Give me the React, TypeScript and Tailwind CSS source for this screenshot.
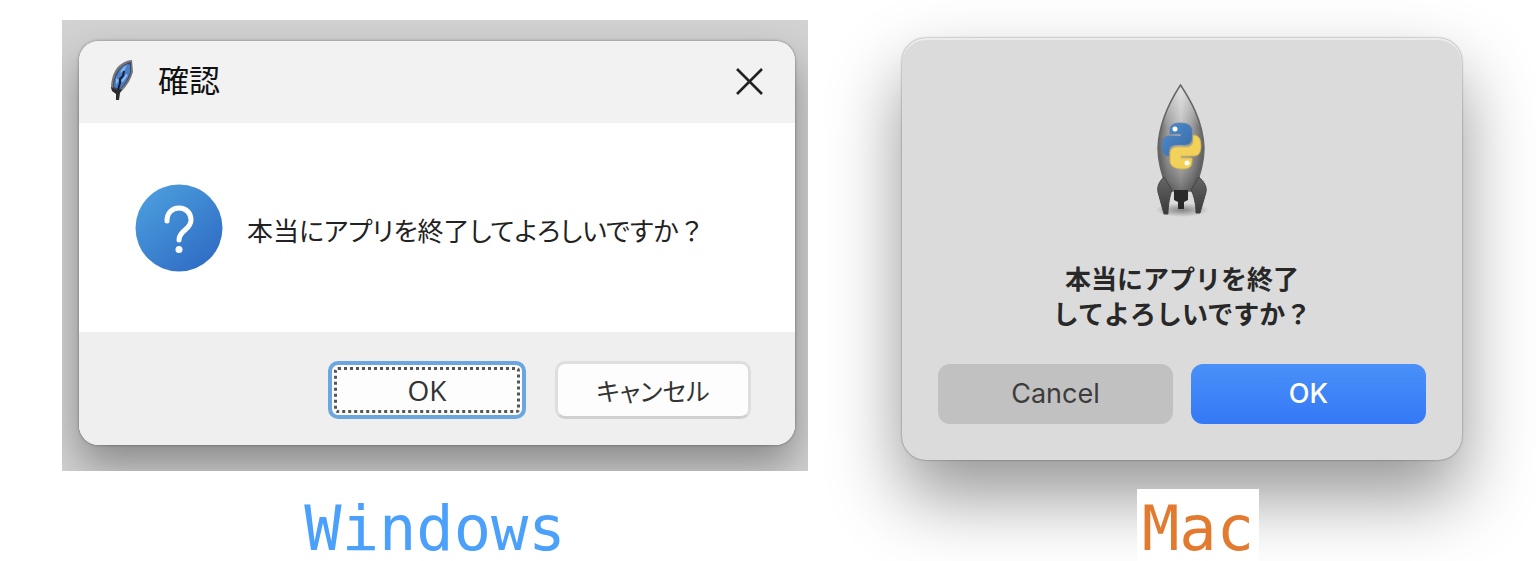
import type { ReactNode } from "react";

const sans = "font-['Inter','Noto_Sans_CJK_JP',sans-serif]";
const winSans = "font-['Open_Sans','Noto_Sans_CJK_JP',sans-serif]";

function FeatherIcon() {
  return (
    <svg width="24" height="43" viewBox="0 0 24 43" aria-hidden="true">
      <path
        d="M22 1 C16 1 9 5 5 12 C2 17 1 24 1 29 C2 32 4 34 7 34 L11 33 C17 27 21 20 23 13 Z"
        fill="#77777a"
      />
      <path
        d="M21 3 C16 4 10 8 7 13 C4 18 3 24 3 29 L8 32 C14 27 19 21 21 13 Z"
        fill="#3a4a66"
      />
      <path
        d="M18 5 C14 6 10 9 8 14 C5 18 4 24 4 28 L9 30 C14 26 18 20 20 13 L20 6 Z"
        fill="#4a80c8"
      />
      <path
        d="M17 6 C13 8 11 11 10 14 L14 12 Z M16 15 L18 16 L13 23 L11 22 Z M6 19 L9 21 L6 26 Z"
        fill="#8ab6ec"
      />
      <path d="M14 12 L13 17 L10 20 L10 24 L8 31" fill="none" stroke="#16203a" strokeWidth="2" />
      <path d="M1 28 L7 31 L12 30 L10 34 L9 41 L6 41 L6 35 L2 32 Z" fill="#2b2b2b" />
    </svg>
  );
}

function QuestionIcon() {
  return (
    <svg width="88" height="88" viewBox="0 0 88 88" className="shrink-0" aria-hidden="true">
      <defs>
        <linearGradient id="question-fill" x1="0.15" y1="0.1" x2="0.85" y2="0.95">
          <stop offset="0" stopColor="#4a9bdc" />
          <stop offset="1" stopColor="#2f6cc4" />
        </linearGradient>
      </defs>
      <circle cx="44" cy="44" r="43.5" fill="url(#question-fill)" />
      <path
        d="M32 37 C32 29 37 24 44 24 C51 24 56 29 56 36 C56 46 44 46 44 56"
        fill="none"
        stroke="#fff"
        strokeWidth="5"
        strokeLinecap="round"
      />
      <circle cx="44" cy="65.5" r="3.5" fill="#fff" />
    </svg>
  );
}

function RocketIcon() {
  return (
    <svg width="56" height="136" viewBox="0 0 56 136" aria-hidden="true">
      <defs>
        <linearGradient id="rocket-hull" x1="0" x2="1">
          <stop offset="0" stopColor="#4c4c4c" />
          <stop offset="0.2" stopColor="#8d8d8d" />
          <stop offset="0.5" stopColor="#bcbcbc" />
          <stop offset="0.75" stopColor="#8f8f8f" />
          <stop offset="1" stopColor="#4a4a4a" />
        </linearGradient>
        <linearGradient id="rocket-shade" x1="0" y1="0" x2="0" y2="1">
          <stop offset="0" stopColor="#fff" stopOpacity="0.6" />
          <stop offset="0.4" stopColor="#fff" stopOpacity="0.1" />
          <stop offset="1" stopColor="#000" stopOpacity="0.4" />
        </linearGradient>
        <linearGradient id="rocket-fin" x1="0" y1="0" x2="0" y2="1">
          <stop offset="0" stopColor="#666" />
          <stop offset="1" stopColor="#3a3a3a" />
        </linearGradient>
        <linearGradient id="snake-blue" x1="0" y1="0" x2="1" y2="1">
          <stop offset="0" stopColor="#4f8fcf" />
          <stop offset="1" stopColor="#3868a4" />
        </linearGradient>
        <linearGradient id="snake-yellow" x1="0" y1="0" x2="1" y2="1">
          <stop offset="0" stopColor="#f3d45f" />
          <stop offset="1" stopColor="#f2cf55" />
        </linearGradient>
        <radialGradient id="rocket-ground">
          <stop offset="0" stopColor="#000" stopOpacity="0.4" />
          <stop offset="1" stopColor="#000" stopOpacity="0" />
        </radialGradient>
      </defs>
      <ellipse cx="28" cy="126" rx="27" ry="7" fill="url(#rocket-ground)" />
      <path
        d="M26.5 1 C35 14 49 36 50 64 C50 78 46 92 40 107 H14 C8 92 4 78 4 64 C5 36 18 14 26.5 1 Z"
        fill="url(#rocket-hull)"
      />
      <path
        d="M26.5 1 C35 14 49 36 50 64 C50 78 46 92 40 107 H14 C8 92 4 78 4 64 C5 36 18 14 26.5 1 Z"
        fill="url(#rocket-shade)"
        stroke="#666"
        strokeWidth="1.5"
      />
      <path d="M20 106 H34 V116 L30 118 V125 H24 V118 L20 116 Z" fill="#2a2a2a" />
      <path
        d="M10 93 C5 98 3 102 4 108 L10 130 H14 C14 121 16 111 18 106 Z"
        fill="url(#rocket-fin)"
        stroke="#444"
      />
      <path
        d="M45 93 C50 98 53 102 52 108 L46 129 H42 C42 121 40 111 37 106 Z"
        fill="url(#rocket-fin)"
        stroke="#444"
      />
      <g transform="translate(8 39)">
        <path
          d="M18 0 C9 0 8 4 8 8 V11 H19 V13 H7 C2 13 0 17 0 23 C0 29 2 33 7 33 V28 C7 24 10 22 14 22 H23 C27 22 30 19 30 15 V8 C30 3 26 0 18 0 Z"
          fill="url(#snake-blue)"
          stroke="#5b7ea8"
          strokeWidth="0.8"
        />
        <path
          d="M21 46 C29 46 30 42 30 38 V35 H19 V33 H32 C37 33 39 29 39 23 C39 16 37 12 31 12 V17 C31 22 28 24 24 24 H15 C11 24 8 26 8 31 V38 C8 43 13 46 21 46 Z"
          fill="url(#snake-yellow)"
          stroke="#cdb04e"
          strokeWidth="0.8"
        />
        <circle cx="13" cy="6" r="2.5" fill="#fff" />
        <circle cx="25" cy="40" r="2.5" fill="#fff" />
      </g>
    </svg>
  );
}

function WindowsDialog() {
  return (
    <div className="overflow-hidden bg-[#d2d2d2] pt-[21px] pr-[13px] pb-[26px] pl-[17px]">
      <div
        role="dialog"
        aria-labelledby="win-title"
        className={`${winSans} overflow-hidden rounded-[20px] bg-white shadow-[0_0_3px_rgba(0,0,0,0.4),0_20px_40px_rgba(0,0,0,0.35)]`}
      >
        <header className="flex h-[82px] items-center bg-[#f2f2f2] pr-[31px] pb-1 pl-[31px]">
          <FeatherIcon />
          <h2 id="win-title" className="ml-6 text-[31px] text-[#111]">
            確認
          </h2>
          <button type="button" aria-label="閉じる" className="ml-auto pt-[2px]">
            <svg width="29" height="29" viewBox="0 0 29 29" aria-hidden="true">
              <path d="M2 2 L27 27 M27 2 L2 27" stroke="#222" strokeWidth="2.6" />
            </svg>
          </button>
        </header>

        <div className="flex h-[209px] items-center gap-6 pl-14">
          <QuestionIcon />
          <p className="pt-2 text-[26px] whitespace-nowrap text-[#222]">
            <span className="[font-feature-settings:'palt']">本当にアプリを終了してよろしいですか</span>？
          </p>
        </div>

        <footer className="flex justify-end gap-[29px] bg-[#efefef] pt-[29px] pr-11 pb-[26px] text-[#333]">
          <button
            type="button"
            className="h-[58px] w-[198px] rounded-[10px] border-4 border-[#6ba6de] bg-[#fdfdfd] p-[2px] text-[28px]"
          >
            <span className="flex h-full items-center justify-center rounded-sm border-3 border-dotted border-[#555]">
              OK
            </span>
          </button>
          <button
            type="button"
            className="h-[58px] w-[196px] rounded-[10px] border-3 border-[#dedede] border-b-[#d0d0d0] bg-[#fdfdfd] pt-1 text-[25px] [font-feature-settings:'palt']"
          >
            キャンセル
          </button>
        </footer>
      </div>
    </div>
  );
}

function MacDialog() {
  return (
    <div
      role="dialog"
      aria-labelledby="mac-message"
      className={`${sans} rounded-3xl bg-[#dbdbdb] px-9 pt-[46px] pb-9 shadow-[inset_0_2px_1px_rgba(255,255,255,0.5),0_0_2px_rgba(0,0,0,0.5),0_36px_72px_rgba(0,0,0,0.42)]`}
    >
      <div className="flex justify-center">
        <RocketIcon />
      </div>
      <p id="mac-message" className="mt-[42px] text-center text-[26px] leading-[35px] font-bold text-[#282828]">
        本当にアプリを終了
        <br />
        してよろしいですか？
      </p>
      <div className="mt-8 grid grid-cols-2 gap-[18px] text-[27px]">
        <button type="button" className="h-[60px] rounded-xl bg-[#c1c1c1] text-[#3c3c3c]">
          Cancel
        </button>
        <button
          type="button"
          className="h-[60px] rounded-xl bg-linear-to-b from-[#4a90f8] to-[#3478f6] font-medium text-white"
        >
          OK
        </button>
      </div>
    </div>
  );
}

function Caption({ children, className }: { children: ReactNode; className: string }) {
  return (
    <figcaption className={`pt-2 font-['DejaVu_Sans_Mono',monospace] text-[62px] leading-[64px] ${className}`}>
      {children}
    </figcaption>
  );
}

export default function App() {
  return (
    <main className="grid grid-cols-[746fr_560fr] gap-[94px] bg-white pr-[74px] pl-[62px]">
      <figure className="relative z-10 flex flex-col items-center pt-5">
        <div className="w-full">
          <WindowsDialog />
        </div>
        <Caption className="mt-[18px] text-[#4aa0fb]">Windows</Caption>
      </figure>

      <figure className="flex flex-col items-center pt-[38px]">
        <div className="w-full">
          <MacDialog />
        </div>
        <Caption className="relative mt-[29px] ml-8 bg-white px-[5px] text-[#e27b30]">Mac</Caption>
      </figure>
    </main>
  );
}
